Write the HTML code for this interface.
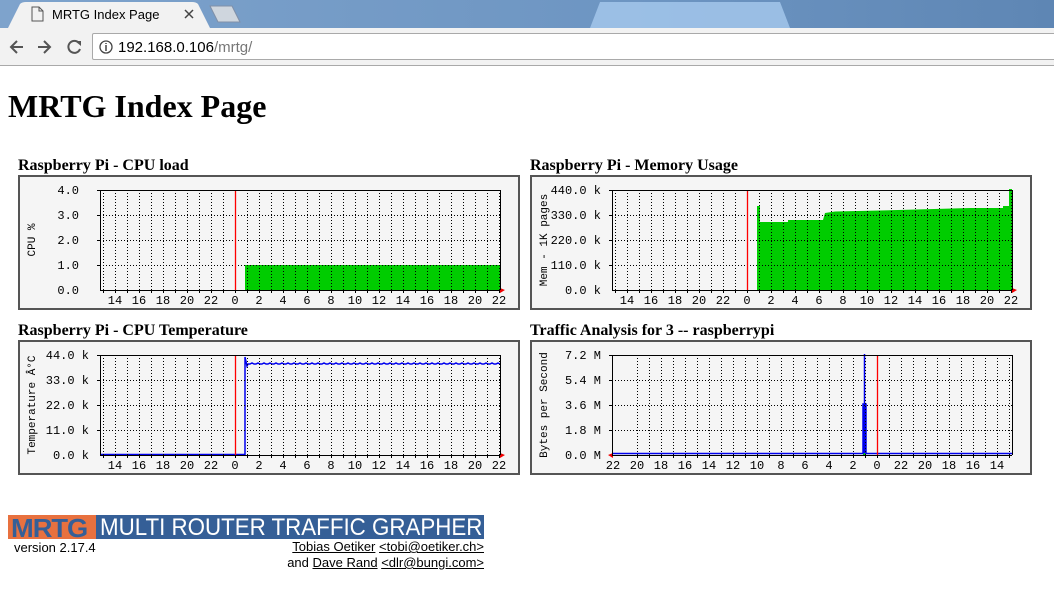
<!DOCTYPE html>
<html><head><meta charset="utf-8"><style>
body{margin:0;width:1054px;height:591px;overflow:hidden;background:#fff;position:relative;font-family:"Liberation Sans",sans-serif}
.abs{position:absolute}
#tabs{left:0;top:0;width:1054px;height:28px;background:linear-gradient(90deg,#7ea3cc,#6d95c2 60%,#5e86b4)}
#tb{left:0;top:28px;width:1054px;height:37px;background:#f2f2f2;border-bottom:1px solid #a9a9a9}
#addr{left:92px;top:33px;width:970px;height:27px;background:#fff;border:1px solid #a9a9a9;border-radius:2px;box-sizing:border-box}
h1{position:absolute;left:8px;top:88px;margin:0;font:bold 32px "Liberation Serif",serif}
.t{position:absolute;font:bold 16px "Liberation Serif",serif}
svg text{font-family:"Liberation Mono",monospace;font-size:12px;fill:#000}
</style></head><body>
<div id="tabs" class="abs"></div>
<svg class="abs" style="left:0;top:0" width="1054" height="30">
<path d="M0 28 L8 28 L20 4 Q22 2 26 2 L192 2 Q196 2 198 4 L210 28 L1054 28 L1054 30 L0 30Z" fill="#f2f2f2"/>
<path d="M210 6 L232 6 L240 22 L218 22Z" fill="#cfd6de" stroke="#8090a8"/>
<path d="M600 2 L780 2 L790 28 L590 28Z" fill="#a6c9ee" opacity=".8"/>
<path d="M32 7 L39 7 L43 11 L43 21 L32 21Z M39 7 L39 11 L43 11" fill="none" stroke="#555"/>
<text x="52" y="19" style="font-family:'Liberation Sans',sans-serif;font-size:13px">MRTG Index Page</text>
<path d="M185 10 L193 18 M193 10 L185 18" stroke="#444" stroke-width="1.5"/>
</svg>
<div id="tb" class="abs"></div>
<div id="addr" class="abs"></div>
<svg class="abs" style="left:0;top:28px" width="300" height="37">
<path d="M23 19 L11 19 M17 13 L11 19 L17 25" stroke="#555" stroke-width="2" fill="none"/>
<path d="M38 19 L50 19 M44 13 L50 19 L44 25" stroke="#555" stroke-width="2" fill="none"/>
<path d="M79 15 A6 6 0 1 0 80 21" stroke="#555" stroke-width="2" fill="none"/><path d="M75 13 L81 13 L81 18Z" fill="#555"/>
<circle cx="106" cy="19" r="6" fill="none" stroke="#444" stroke-width="1.3"/><path d="M106 17 V23 M106 15 V16" stroke="#444" stroke-width="1.5"/>
<text x="118" y="24" style="font-family:'Liberation Sans',sans-serif;font-size:15px">192.168.0.106<tspan fill="#777">/mrtg/</tspan></text>
</svg>
<h1>MRTG Index Page</h1>
<div class="t" style="left:18px;top:157px">Raspberry Pi - CPU load</div>
<div class="t" style="left:530px;top:157px">Raspberry Pi - Memory Usage</div>
<div class="t" style="left:18px;top:322px">Raspberry Pi - CPU Temperature</div>
<div class="t" style="left:530px;top:322px">Traffic Analysis for 3 -- raspberrypi</div>
<div id="g"></div>
<div class="abs" style="left:8px;top:515px;width:476px;height:24px;background:#355f97"></div>
<div class="abs" style="left:8px;top:515px;width:88px;height:24px;background:#e8713f"></div>
<div class="abs" style="left:11px;top:513px;font:bold 26px 'Liberation Sans',sans-serif;color:#355f97;letter-spacing:-1px;transform:scaleX(1.05);transform-origin:left">MRTG</div>
<div class="abs" style="left:100px;top:514px;font:24px 'Liberation Sans',sans-serif;color:#fff;white-space:nowrap;transform:scaleX(0.93);transform-origin:left">MULTI ROUTER TRAFFIC GRAPHER</div>
<div class="abs" style="left:14px;top:540px;font:13px 'Liberation Sans',sans-serif">version 2.17.4</div>
<div class="abs" style="right:570px;top:539px;font:13px/16px 'Liberation Sans',sans-serif;text-align:right"><u>Tobias Oetiker</u> <u>&lt;tobi@oetiker.ch&gt;</u><br>and <u>Dave Rand</u> <u>&lt;dlr@bungi.com&gt;</u></div>
<script>
function graph(ox,oy,ylab,yl,xl,redx,data,yo){
 let s=`<svg class="abs" style="left:${ox}px;top:${oy}px" width="502" height="135"><rect x="1" y="1" width="500" height="133" fill="#f5f5f5" stroke="#555" stroke-width="2"/>`;
 const L=82,R=482,T=15,B=115;
 s+=data;
 for(let x=redx-12*20;x<R;x+=12){ if(x<=L)continue; if(x!=redx) s+=`<line x1="${x+.5}" y1="${T}" x2="${x+.5}" y2="${B}" stroke="#000" stroke-dasharray="1,2"/>`; s+=`<line x1="${x+.5}" y1="${B}" x2="${x+.5}" y2="${B+3}" stroke="#000"/>`;}
 for(let i=1;i<=4;i++){let y=B-25*i; s+=`<line x1="${L}" y1="${y+.5}" x2="${R}" y2="${y+.5}" stroke="#000" stroke-dasharray="1,2"/><line x1="${L-3}" y1="${y+.5}" x2="${L}" y2="${y+.5}" stroke="#000"/>`;}
 s+=`<line x1="${redx+.5}" y1="${T}" x2="${redx+.5}" y2="${B}" stroke="#f00" stroke-width="1.3"/>`;
 s+=`<path d="M${L+.5} ${T} V${B+.5} H${R}" stroke="#000" fill="none"/><line x1="${R+.5}" y1="${T}" x2="${R+.5}" y2="${B}" stroke="#000"/><line x1="${L}" y1="${T+.5}" x2="${R}" y2="${T+.5}" stroke="#000"/>`;
 for(let i=0;i<=4;i++) s+=`<text x="${L-yo}" y="${B-25*i+4}" text-anchor="end">${yl[i]}</text>`;
 xl.forEach(([t,x])=>s+=`<text x="${x}" y="${B+14}" text-anchor="middle">${t}</text>`);
 s+=`<text transform="translate(17,${T+50}) rotate(-90)" text-anchor="middle" style="font-size:11px">${ylab}</text></svg>`;
 return s;
}
function hrs(redx){let a=[];const lab=[14,16,18,20,22,0,2,4,6,8,10,12,14,16,18,20,22];for(let i=0;i<17;i++)a.push([lab[i],redx-120+24*i]);return a;}
let g='';
g+=graph(18,175,'CPU %',['0.0','1.0','2.0','3.0','4.0'],hrs(217),217,`<rect x="227" y="90" width="255" height="25" fill="#00cc00"/><path d="M482 113 L487 115 L482 118Z" fill="#e00"/>`,21);
let mem='M227 115 V31 H230 V47 L258 47 V45 L293 45 L295 38 L305 36.5 L350 35.5 L395 34.3 L440 33 L473 33 V31 L479 31 V14 H482 V115Z';
g+=graph(530,175,'Mem - 1K pages',['0.0 k','110.0 k','220.0 k','330.0 k','440.0 k'],hrs(217),217,`<path d="${mem}" fill="#00cc00"/><path d="M482 113 L487 115 L482 118Z" fill="#e00"/>`,11);
let tp='M83 114.5 H227 V17 L229 26 ';for(let x=230;x<=482;x+=2)tp+=`L${x} ${24+((x*7)%3===0?-1:0)} `;
g+=graph(18,340,'Temperature Â°C',['0.0 k','11.0 k','22.0 k','33.0 k','44.0 k'],hrs(217),217,`<path d="${tp}" fill="none" stroke="#0000ee" stroke-width="1.5"/><path d="M482 113 L487 115 L482 118Z" fill="#e00"/>`,11);
let tl=[];const tlab=[22,20,18,16,14,12,10,8,6,4,2,0,22,20,18,16,14];for(let i=0;i<17;i++)tl.push([tlab[i],83+24*i]);
g+=graph(530,340,'Bytes per Second',['0.0 M','1.8 M','3.6 M','5.4 M','7.2 M'],tl,347,`<rect x="333" y="64" width="3" height="51" fill="#00cc00"/><path d="M83 113.5 H333 V64 H336 V113.5 H482 M334.5 113 V14" fill="none" stroke="#0000ee" stroke-width="1.5"/><path d="M83 113 L78 115 L83 118Z" fill="#e00"/>`,11);
document.getElementById('g').innerHTML=g;
</script>
</body></html>
